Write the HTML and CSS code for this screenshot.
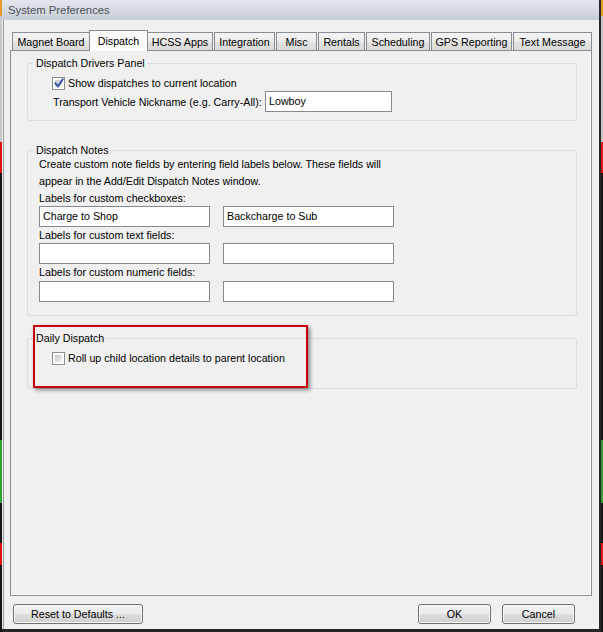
FILE: index.html
```html
<!DOCTYPE html>
<html>
<head>
<meta charset="utf-8">
<title>System Preferences</title>
<link rel="stylesheet" href="styles.css">
</head>
<body>
<div class="window">
  <div class="titlebar">System Preferences</div>
  <div class="client">
    <div class="tabs">
      <div class="tab t-magnet">Magnet Board</div>
      <div class="tab t-dispatch active">Dispatch</div>
      <div class="tab t-hcss">HCSS Apps</div>
      <div class="tab t-integration">Integration</div>
      <div class="tab t-misc">Misc</div>
      <div class="tab t-rentals">Rentals</div>
      <div class="tab t-scheduling">Scheduling</div>
      <div class="tab t-gps">GPS Reporting</div>
      <div class="tab t-text">Text Message</div>
    </div>
    <div class="panel">
      <fieldset class="group g1">
        <legend>Dispatch Drivers Panel</legend>
        <div class="group-body">
          <div class="check-row">
            <span class="checkbox"><svg class="tick" width="11" height="11" viewBox="0 0 11 11"><path d="M1.8 4.6 L5 8.4 L10.2 0.6" fill="none" stroke="#3f57a2" stroke-width="2"/></svg></span>
            <span class="check-label">Show dispatches to current location</span>
          </div>
          <div class="field-row">
            <span class="field-label">Transport Vehicle Nickname (e.g. Carry-All):</span>
            <div class="textbox nick">Lowboy</div>
          </div>
        </div>
      </fieldset>

      <fieldset class="group g2">
        <legend>Dispatch Notes</legend>
        <div class="group-body">
          <p class="notes">Create custom note fields by entering field labels below. These fields will<br>appear in the Add/Edit Dispatch Notes window.</p>
          <div class="sub-label l1">Labels for custom checkboxes:</div>
          <div class="box-row">
            <div class="textbox wide">Charge to Shop</div>
            <div class="textbox wide">Backcharge to Sub</div>
          </div>
          <div class="sub-label l2">Labels for custom text fields:</div>
          <div class="box-row">
            <div class="textbox wide"></div>
            <div class="textbox wide"></div>
          </div>
          <div class="sub-label l3">Labels for custom numeric fields:</div>
          <div class="box-row">
            <div class="textbox wide"></div>
            <div class="textbox wide"></div>
          </div>
        </div>
      </fieldset>

      <fieldset class="group g3">
        <legend>Daily Dispatch</legend>
        <div class="group-body">
          <div class="check-row">
            <span class="checkbox"></span>
            <span class="check-label">Roll up child location details to parent location</span>
          </div>
        </div>
      </fieldset>
    </div>
    <div class="buttons">
      <button class="btn reset">Reset to Defaults ...</button>
      <div class="spacer"></div>
      <button class="btn ok">OK</button>
      <button class="btn cancel">Cancel</button>
    </div>
  </div>
  <div class="highlight"></div>
</div>
</body>
</html>
```
FILE: styles.css
```css
* { box-sizing: border-box; }

html, body { margin: 0; padding: 0; }

body {
  width: 603px;
  height: 632px;
  overflow: hidden;
  font-family: "Liberation Sans", Arial, sans-serif;
  font-size: 10.7px;
  color: #000;
  background: linear-gradient(to bottom,
    #e89c2c 0, #e89c2c 16px,
    #c4c8cd 16px, #c4c8cd 142px,
    #e01212 142px, #e01212 173px,
    #161616 173px, #161616 440px,
    #2fa332 440px, #2fa332 503px,
    #161616 503px, #161616 543px,
    #e01212 543px, #e01212 565px,
    #161616 565px, #161616 100%);
}

.window {
  margin-left: 2px;
  width: 599px;
  height: 632px;
  background: #f0f0f0;
  border-right: 2px solid #262626;
  border-bottom: 3px solid #262626;
  display: flex;
  flex-direction: column;
  position: relative;
}

.titlebar {
  flex: none;
  height: 20px;
  padding-left: 6px;
  line-height: 21px;
  font-size: 11.3px;
  color: #4c5159;
  background: linear-gradient(to bottom, #e3e7ed, #c9ced6);
}

.client {
  flex: 1;
  margin-left: 1px;
  border-left: 1px solid #9a9a9a;
  padding: 10px 0 0 6px;
  display: flex;
  flex-direction: column;
}

/* Tabs */
.tabs {
  display: flex;
  align-items: flex-end;
  gap: 1px;
  height: 20px;
  padding-left: 2px;
}

.tab {
  height: 18px;
  border: 1px solid #898c95;
  border-bottom: none;
  background: linear-gradient(to bottom, #f4f4f4, #ececec 50%, #e2e2e2 51%, #dadada);
  display: flex;
  align-items: center;
  justify-content: center;
  white-space: nowrap;
  padding-top: 1px;
}

.tab.active {
  height: 21px;
  margin: 0 -2px -1px;
  background: #fbfbfb;
  position: relative;
  z-index: 1;
  padding-top: 0;
  padding-bottom: 1px;
}

.t-magnet { width: 78px; }
.t-dispatch { width: 59px; }
.t-hcss { width: 66px; }
.t-integration { width: 61px; }
.t-misc { width: 41px; }
.t-rentals { width: 47px; }
.t-scheduling { width: 64px; }
.t-gps { width: 81px; }
.t-text { width: 79px; }

/* Panel */
.panel {
  flex: none;
  width: 582px;
  height: 546px;
  border: 1px solid #898c95;
  background: #f0f0f0;
  box-shadow: inset -1px -1px 0 #fdfdfd;
  padding: 6px 14px 0 16px;
}

.group {
  margin: 0;
  padding: 0;
  width: 550px;
  border: 1px solid #d5dfe5;
  border-radius: 3px;
  min-width: 0;
}

.group legend {
  margin-left: 6px;
  padding: 0 2px;
  line-height: 13px;
}

.g2 { margin-top: 23px; }
.g3 { margin-top: 16px; }

.g1 .group-body { padding: 6px 0 8px 24px; }
.g2 .group-body { padding: 0 0 13px 11px; }
.g3 .group-body { padding: 6px 0 23px 24px; }

.check-row {
  display: flex;
  align-items: flex-start;
  height: 14px;
}

.checkbox {
  flex: none;
  width: 13px;
  height: 13px;
  margin-top: 1px;
  border: 1px solid #8e8f8f;
  padding: 2px;
  background: linear-gradient(135deg, #c4c8ce, #f4f4f4) content-box, #fdfdfd;
}

.tick {
  display: block;
  margin: -2px;
}

.check-label {
  margin-left: 3px;
  line-height: 14px;
  white-space: nowrap;
}

.field-row {
  display: flex;
  align-items: center;
  margin-top: 1px;
  height: 21px;
}

.field-label {
  width: 212px;
  margin-left: 1px;
  white-space: nowrap;
}

.textbox {
  height: 21px;
  border: 1px solid #868a90;
  background: #fff;
  padding: 0 0 0 3px;
  line-height: 18px;
  white-space: nowrap;
}

.nick { width: 127px; }
.wide { width: 171px; }

.notes {
  margin: -1px 0 0;
  line-height: 17px;
}

.sub-label { white-space: nowrap; }
.l1 { line-height: 16px; }
.l2 { line-height: 16px; }
.l3 { line-height: 17px; }

.box-row {
  display: flex;
  gap: 13px;
}

/* Buttons */
.buttons {
  display: flex;
  margin-top: 8px;
  height: 20px;
}

.btn {
  font-family: inherit;
  font-size: 10.7px;
  color: #000;
  height: 20px;
  border: 1px solid #707070;
  border-radius: 3px;
  background: linear-gradient(to bottom, #f2f2f2, #ebebeb 50%, #dddddd 51%, #cfcfcf);
  box-shadow: inset 0 0 0 1px #f8f8f8;
  padding: 0;
  margin: 0;
}

.reset { width: 130px; margin-left: 3px; }
.spacer { flex: 1; }
.ok { width: 73px; }
.cancel { width: 73px; margin-left: 11px; margin-right: 24px; }

/* Red annotation rectangle drawn over the dialog */
.highlight {
  position: absolute;
  left: 31px;
  top: 325px;
  width: 275px;
  height: 63px;
  border: 2px solid #c8000b;
  box-shadow: 2px 2px 4px rgba(0, 0, 0, 0.45);
}
```
